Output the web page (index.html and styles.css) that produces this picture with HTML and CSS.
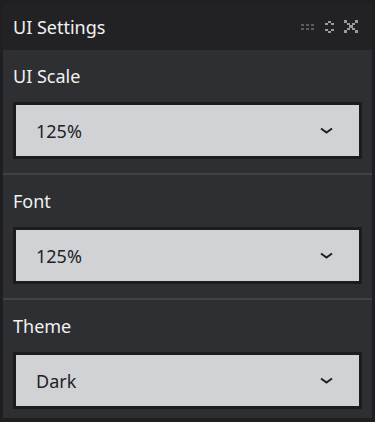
FILE: index.html
```html
<!DOCTYPE html>
<html lang="en">
  <head>
    <meta charset="UTF-8" />
    <meta name="viewport" content="width=device-width, initial-scale=1.0" />
    <title>UI Settings</title>
    <link rel="stylesheet" href="styles.css">
  </head>
  <body>
    <div class="panel">
      <!-- header -->
      <div class="panel-header">
        <span class="panel-title">UI Settings</span>
        <div class="panel-tools">
          <svg class="tool tool-grip" width="14" height="8" viewBox="0 0 14 8">
            <rect x="0" y="1" width="3" height="2" />
            <rect x="5" y="1" width="3" height="2" />
            <rect x="10" y="1" width="3" height="2" />
            <rect x="0" y="5" width="3" height="2" />
            <rect x="5" y="5" width="3" height="2" />
            <rect x="10" y="5" width="3" height="2" />
          </svg>
          <svg class="tool tool-collapse" width="9" height="12" viewBox="0 0 9 12">
            <rect x="3" y="0" width="3" height="2" />
            <rect x="0" y="2" width="3" height="2" />
            <rect x="6" y="2" width="3" height="2" />
            <rect x="0" y="8" width="3" height="2" />
            <rect x="6" y="8" width="3" height="2" />
            <rect x="3" y="10" width="3" height="2" />
          </svg>
          <svg class="tool tool-close" width="14" height="13" viewBox="0 0 14 13">
            <rect x="0" y="0" width="3" height="3" />
            <rect x="11" y="0" width="3" height="3" />
            <rect x="3" y="3" width="3" height="2" />
            <rect x="8" y="3" width="3" height="2" />
            <rect x="5" y="5" width="4" height="3" />
            <rect x="3" y="8" width="3" height="2" />
            <rect x="8" y="8" width="3" height="2" />
            <rect x="0" y="10" width="3" height="3" />
            <rect x="11" y="10" width="3" height="3" />
          </svg>
        </div>
      </div>

      <!-- settings -->
      <section class="setting">
        <div class="setting-label">UI Scale</div>
        <div class="select">
          <span class="select-value">125%</span>
          <svg class="chevron" width="13" height="7" viewBox="0 0 13 7">
            <polyline points="1,1.5 6.5,5.5 12,1.5" />
          </svg>
        </div>
      </section>

      <section class="setting">
        <div class="setting-label">Font</div>
        <div class="select">
          <span class="select-value">125%</span>
          <svg class="chevron" width="13" height="7" viewBox="0 0 13 7">
            <polyline points="1,1.5 6.5,5.5 12,1.5" />
          </svg>
        </div>
      </section>

      <section class="setting">
        <div class="setting-label">Theme</div>
        <div class="select">
          <span class="select-value">Dark</span>
          <svg class="chevron" width="13" height="7" viewBox="0 0 13 7">
            <polyline points="1,1.5 6.5,5.5 12,1.5" />
          </svg>
        </div>
      </section>
    </div>
  </body>
</html>
```

FILE: styles.css
```css
body {
  margin: 0;
  padding: 0;
  background-color: #1e1e20;
  font-family: "Noto Sans", "Open Sans", sans-serif;
}

.panel {
  box-sizing: border-box;
  height: 422px;
  border: 3px solid #1f1f22;
  border-bottom-width: 4px;
  background-color: #414246;
  overflow: hidden;
}

/* header */
.panel-header {
  display: flex;
  align-items: center;
  justify-content: space-between;
  height: 47px;
  padding: 0 10px;
  background-color: #222225;
}

.panel-title {
  color: #f2f2f2;
  font-size: 18px;
}

.panel-tools {
  display: flex;
  align-items: center;
  gap: 10px;
  padding-right: 4px;
}

.tool-grip {
  fill: #5c5c60;
}

.tool-collapse,
.tool-close {
  fill: #9a9a9e;
}

/* settings */
.setting {
  padding: 0 10px 14px;
  margin-bottom: 2px;
  background-color: #2e2f33;
}

.setting-label {
  height: 52px;
  line-height: 52px;
  color: #f2f2f2;
  font-size: 18px;
}

.select {
  display: flex;
  align-items: center;
  justify-content: space-between;
  box-sizing: border-box;
  height: 57px;
  padding: 0 26px 0 20px;
  border: 3px solid #1c1c1e;
  background-color: #d1d2d6;
}

.select-value {
  color: #222226;
  font-size: 18px;
}

.chevron {
  fill: none;
  stroke: #1f1f22;
  stroke-width: 2;
}
```
